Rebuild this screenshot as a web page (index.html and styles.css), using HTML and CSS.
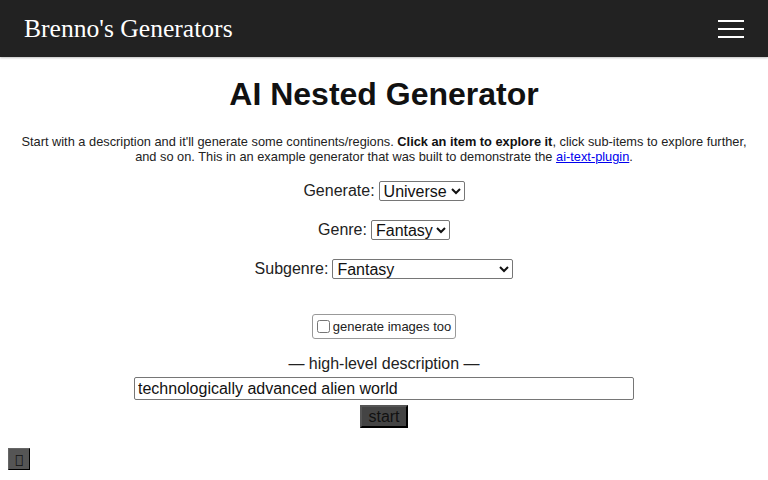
FILE: index.html
```html
<!DOCTYPE html>
<html>
<head>
<meta charset="utf-8">
<link rel="stylesheet" href="styles.css">
</head>
<body>
<header class="topbar">
  <div class="brand">Brenno's Generators</div>
  <button class="menu-btn" aria-label="menu">
    <span class="bar"></span><span class="bar"></span><span class="bar"></span>
  </button>
</header>
<main class="main">
  <h1 class="title">AI Nested Generator</h1>
  <p class="intro">Start with a description and it'll generate some continents/regions. <b>Click an item to explore it</b>, click sub-items to explore further, and so on. This in an example generator that was built to demonstrate the <a href="#">ai-text-plugin</a>.</p>
  <div class="row"><span>Generate:</span><select class="sel"><option>Universe</option></select></div>
  <div class="row"><span>Genre:</span><select class="sel"><option>Fantasy</option></select></div>
  <div class="row"><span>Subgenre:</span><select class="sel wide"><option>Fantasy</option></select></div>
  <label class="check"><input type="checkbox" class="cb"> generate images too</label>
  <div class="desc-label">— high-level description —</div>
  <input class="desc" type="text" value="technologically advanced alien world">
  <button class="start">start</button>
</main>
<button class="corner">&#xE900;</button>
</body>
</html>
```
FILE: styles.css
```css
html, body {
  margin: 0;
  padding: 0;
  background: #fff;
}
body {
  font-family: "Liberation Sans", Arial, sans-serif;
  color: #222;
  width: 768px;
  height: 480px;
  overflow: hidden;
}
.topbar {
  height: 57px;
  background: #222;
  display: flex;
  align-items: center;
  justify-content: space-between;
  padding: 0 24px;
  box-shadow: 0 1px 2px rgba(0,0,0,0.25);
  position: relative;
}
.brand {
  font-family: "Liberation Serif", "Times New Roman", serif;
  font-size: 25.6px;
  color: #fff;
}
.menu-btn {
  background: none;
  border: none;
  padding: 0;
  width: 26px;
  display: flex;
  flex-direction: column;
  gap: 6px;
}
.bar {
  display: block;
  height: 2px;
  width: 26px;
  background: #fff;
}
.main {
  display: flex;
  flex-direction: column;
  align-items: center;
  text-align: center;
  padding: 0 20px;
}
.title {
  font-size: 32px;
  font-weight: bold;
  color: #111;
  margin: 19px 0 0;
  line-height: 37px;
}
.intro {
  font-size: 12.8px;
  line-height: 15px;
  margin: 21px 0 0;
  color: #222;
}
.intro b { color: #111; }
.intro a { color: #0000ee; }
.row {
  font-size: 16px;
  margin-top: 16px;
  height: 22px;
  display: flex;
  align-items: center;
  gap: 4px;
  color: #222;
}
.row + .row { margin-top: 17px; }
.sel {
  font-family: "Liberation Sans", Arial, sans-serif;
  font-size: 16px;
  height: 20px;
  color: #111;
  background: #fff;
  border: 1px solid #767676;
  border-radius: 2px;
}
.wide { width: 181px; }
.check {
  margin-top: 34px;
  font-size: 13px;
  border: 1px solid #999;
  border-radius: 3px;
  padding: 4px;
  display: flex;
  align-items: center;
  gap: 3px;
  color: #222;
}
.cb {
  margin: 0;
  width: 13px;
  height: 13px;
}
.desc-label {
  margin-top: 16px;
  font-size: 16px;
  line-height: 18px;
  color: #222;
}
.desc {
  margin-top: 4px;
  width: 500px;
  height: 23px;
  box-sizing: border-box;
  font-family: "Liberation Sans", Arial, sans-serif;
  font-size: 16px;
  padding: 1px 3px;
  border: 1px solid #767676;
  border-radius: 2px;
  color: #111;
}
.start {
  margin-top: 5px;
  font-family: "Liberation Sans", Arial, sans-serif;
  font-size: 16px;
  background: #444;
  color: #111;
  border: 2px solid;
  border-color: #555 #000 #000 #555;
  padding: 1px 6px;
  height: 23px;
  line-height: 18px;
}
.corner {
  position: fixed;
  left: 8px;
  top: 448px;
  width: 22px;
  height: 22px;
  padding: 0;
  background: #555;
  border: 1px solid;
  border-color: #666 #000 #000 #666;
  color: #111;
  font-size: 13px;
  font-family: "DejaVu Sans", sans-serif;
}
```
